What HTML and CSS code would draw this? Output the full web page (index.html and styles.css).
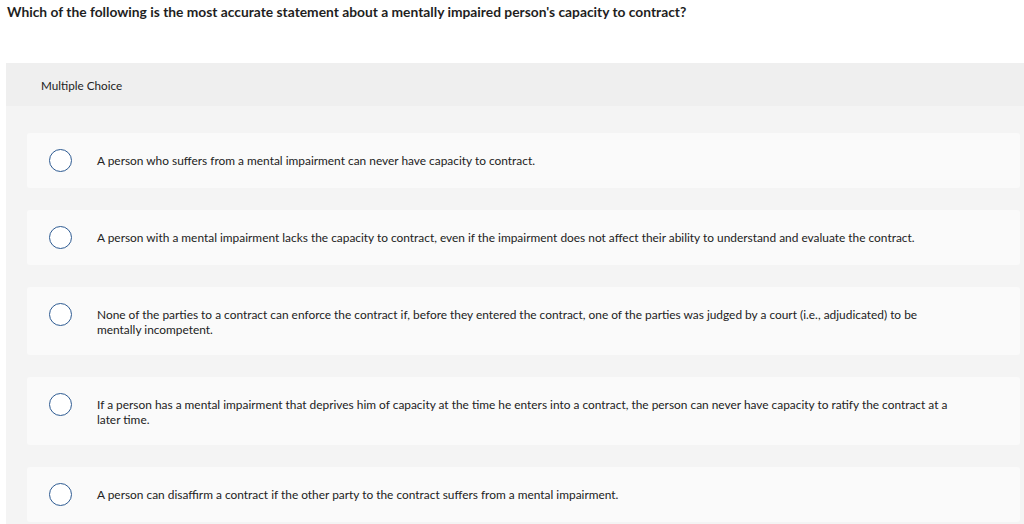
FILE: index.html
```html
<!DOCTYPE html>
<html>
<head>
<meta charset="utf-8">
<link rel="stylesheet" href="styles.css">
</head>
<body>
<h1 class="prompt">Which of the following is the most accurate statement about a mentally impaired person's capacity to contract?</h1>
<section class="question">
  <div class="qhead">Multiple Choice</div>
  <div class="choices">
    <div class="choice"><span class="radio"></span><p class="ctext">A person who suffers from a mental impairment can never have capacity to contract.</p></div>
    <div class="choice"><span class="radio"></span><p class="ctext">A person with a mental impairment lacks the capacity to contract, even if the impairment does not affect their ability to understand and evaluate the contract.</p></div>
    <div class="choice"><span class="radio"></span><p class="ctext">None of the parties to a contract can enforce the contract if, before they entered the contract, one of the parties was judged by a court (i.e., adjudicated) to be mentally incompetent.</p></div>
    <div class="choice"><span class="radio"></span><p class="ctext">If a person has a mental impairment that deprives him of capacity at the time he enters into a contract, the person can never have capacity to ratify the contract at a later time.</p></div>
    <div class="choice"><span class="radio"></span><p class="ctext">A person can disaffirm a contract if the other party to the contract suffers from a mental impairment.</p></div>
  </div>
</section>
</body>
</html>
```
FILE: styles.css
```css
html, body { margin: 0; padding: 0; background: #fff; }
body { font-family: Lato, "Liberation Sans", sans-serif; color: #222; overflow: hidden; }
.prompt { margin: 0; padding: 4px 7px 0; font-size: 13.8px; font-weight: 700; line-height: 16px; color: #1f1f1f; }
.question { margin: 43px 0 0 6px; background: #f4f4f4; }
.qhead { height: 43px; display: flex; align-items: center; padding-left: 35px; background: #efefef; font-size: 11.7px; color: #222; }
.choices { display: flex; flex-direction: column; gap: 22px; padding: 27px 4px 10px 21px; }
.choice { display: flex; align-items: flex-start; background: #fafafa; border-radius: 3px; padding: 16px 22px; }
.radio { flex: none; width: 21px; height: 21px; border: 1.5px solid #2e5b92; border-radius: 50%; background: #fff; }
.ctext { margin: 0; padding: 4px 34px 2px 25px; font-size: 11.9px; line-height: 15px; color: #222; }
```
